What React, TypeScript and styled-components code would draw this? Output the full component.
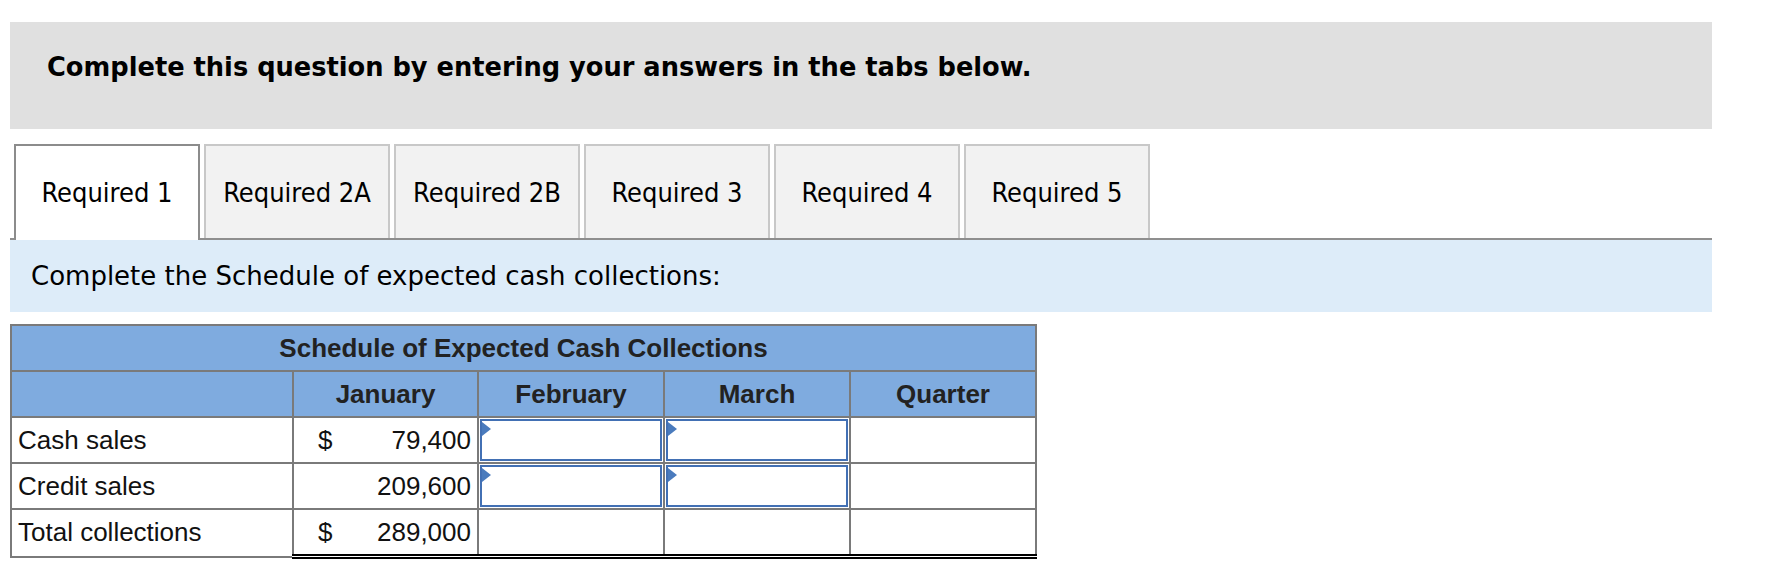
import React from "react";
import styled, { createGlobalStyle } from "styled-components";

const Global = createGlobalStyle`
  html, body { margin: 0; padding: 0; background: #ffffff; }
  body { font-family: "DejaVu Sans", sans-serif; color: #000; }
`;

const Page = styled.div`
  padding: 22px 78px 0 10px;
  width: 1702px;
`;

const Banner = styled.div`
  background: #e0e0e0;
  height: 107px;
  box-sizing: border-box;
  padding: 29px 0 0 37px;
  font-family: "DejaVu Sans", sans-serif;
  font-weight: 700;
  font-size: 25.7px;
  line-height: 32px;
`;

const TabStrip = styled.div`
  margin-top: 15px;
  display: flex;
  gap: 4px;
  padding-left: 4px;
  border-bottom: 2px solid #8f8f8f;
  height: 94px;
  box-sizing: content-box;
`;

const Tab = styled.div<{ $active?: boolean }>`
  width: 186px;
  height: ${(p) => (p.$active ? "96px" : "94px")};
  box-sizing: border-box;
  display: flex;
  align-items: center;
  justify-content: center;
  padding-top: 1px;
  padding-bottom: ${(p) => (p.$active ? "2px" : "0")};
  background: ${(p) => (p.$active ? "#ffffff" : "#f2f2f2")};
  border: 2px solid ${(p) => (p.$active ? "#8c8c8c" : "#c8c8c8")};
  border-bottom: ${(p) => (p.$active ? "none" : "0")};
  font-family: "DejaVu Sans Condensed", "DejaVu Sans", sans-serif;
  font-size: 27px;
  color: #000;
  position: relative;
  z-index: ${(p) => (p.$active ? 1 : 0)};
`;

const Instruction = styled.div`
  background: #ddecf9;
  height: 72px;
  box-sizing: border-box;
  padding: 0 0 0 21px;
  display: flex;
  align-items: center;
  font-family: "DejaVu Sans", sans-serif;
  font-size: 26px;
`;

const Table = styled.table`
  margin-top: 12px;
  border-collapse: collapse;
  font-family: "Liberation Sans", Arial, sans-serif;
  font-size: 26px;
  color: #1a1a1a;
  table-layout: fixed;
  width: 1025px;
  border: 2px solid #7a7a7a;
`;

const TitleCell = styled.th`
  background: #7fabdf;
  height: 44px;
  padding: 0;
  font-weight: 700;
  text-align: center;
  border: 2px solid #7a7a7a;
  color: #222;
`;

const HeadCell = styled.th`
  background: #7fabdf;
  height: 44px;
  padding: 0;
  font-weight: 700;
  text-align: center;
  border: 2px solid #7a7a7a;
  color: #222;
`;

const LabelCell = styled.td`
  height: 44px;
  padding: 0 0 0 6px;
  border: 2px solid #7a7a7a;
  white-space: nowrap;
  color: #111;
`;

const AmountCell = styled.td<{ $total?: boolean }>`
  height: 44px;
  padding: 0;
  border: 2px solid #7a7a7a;
  ${(p) =>
    p.$total
      ? `border-top: 2px solid #000; border-bottom: 5px double #000;`
      : ""}
`;

const Amount = styled.div`
  display: flex;
  justify-content: space-between;
  align-items: center;
  padding: 0 6px 0 24px;
  color: #111;
`;

const Dollar = styled.span`
  width: 16px;
`;

const InputCell = styled.td`
  height: 44px;
  padding: 0;
  border: 2px solid #7a7a7a;
`;

const InputBox = styled.div`
  position: relative;
  margin: 1px;
  height: 42px;
  box-sizing: border-box;
  border: 2px solid #4270b4;
  background: #fff;
`;

const Flag = styled.span`
  position: absolute;
  left: 0;
  top: 1px;
  width: 0;
  height: 0;
  border-top: 7px solid transparent;
  border-bottom: 7px solid transparent;
  border-left: 9px solid #4a7bbd;
`;

const tabs = ["Required 1", "Required 2A", "Required 2B", "Required 3", "Required 4", "Required 5"];

const Input = () => (
  <InputCell>
    <InputBox>
      <Flag />
    </InputBox>
  </InputCell>
);

export default function App() {
  return (
    <>
      <Global />
      <Page>
        <Banner>Complete this question by entering your answers in the tabs below.</Banner>
        <TabStrip>
          {tabs.map((t, i) => (
            <Tab key={t} $active={i === 0}>
              {t}
            </Tab>
          ))}
        </TabStrip>
        <Instruction>Complete the Schedule of expected cash collections:</Instruction>
        <Table>
          <colgroup>
            <col style={{ width: 282 }} />
            <col style={{ width: 185 }} />
            <col style={{ width: 186 }} />
            <col style={{ width: 186 }} />
            <col style={{ width: 186 }} />
          </colgroup>
          <thead>
            <tr>
              <TitleCell colSpan={5}>Schedule of Expected Cash Collections</TitleCell>
            </tr>
            <tr>
              <HeadCell />
              <HeadCell>January</HeadCell>
              <HeadCell>February</HeadCell>
              <HeadCell>March</HeadCell>
              <HeadCell>Quarter</HeadCell>
            </tr>
          </thead>
          <tbody>
            <tr>
              <LabelCell>Cash sales</LabelCell>
              <AmountCell>
                <Amount>
                  <Dollar>$</Dollar>
                  <span>79,400</span>
                </Amount>
              </AmountCell>
              <Input />
              <Input />
              <AmountCell />
            </tr>
            <tr>
              <LabelCell>Credit sales</LabelCell>
              <AmountCell>
                <Amount>
                  <Dollar />
                  <span>209,600</span>
                </Amount>
              </AmountCell>
              <Input />
              <Input />
              <AmountCell />
            </tr>
            <tr>
              <LabelCell>Total collections</LabelCell>
              <AmountCell $total>
                <Amount>
                  <Dollar>$</Dollar>
                  <span>289,000</span>
                </Amount>
              </AmountCell>
              <AmountCell $total />
              <AmountCell $total />
              <AmountCell $total />
            </tr>
          </tbody>
        </Table>
      </Page>
    </>
  );
}
